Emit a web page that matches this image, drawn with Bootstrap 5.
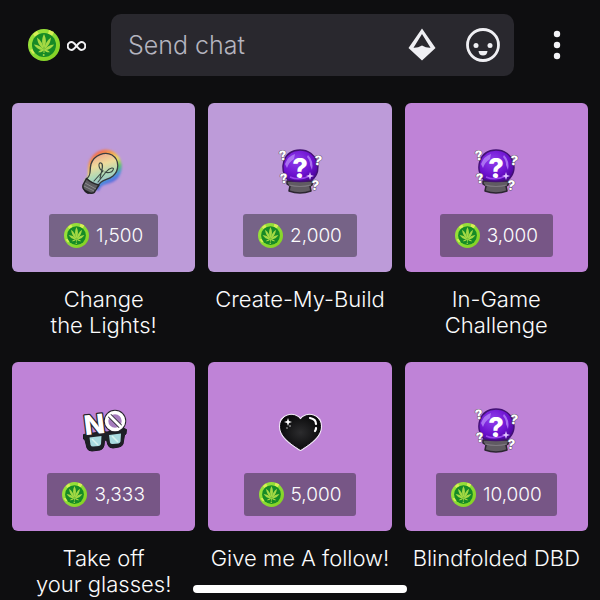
<!DOCTYPE html>
<html lang="en">
<head>
<meta charset="utf-8">
<meta name="viewport" content="width=device-width, initial-scale=1">
<title>Channel rewards</title>
<link href="https://cdn.jsdelivr.net/npm/bootstrap@5.3.0/dist/css/bootstrap.min.css" rel="stylesheet">
<style>
body { background: #0e0e10; color: #fbfbfc; font-family: Inter, "Liberation Sans", sans-serif; overflow-x: hidden; }
svg { display: block; flex: none; }
.plain-btn { background: none; border: 0; padding: 0; color: inherit; }
.chat-bar { padding: 14px 0 0 28px; }
.balance { gap: 7px; width: 83px; }
.chat-box { background: #29282e; border-radius: 10px; height: 62px; padding: 0 13px 0 17px; gap: 26px; min-width: 0; }
.chat-input, .chat-input:focus { background: transparent; border: 0; box-shadow: none; color: #efeff1; font-size: 25px; font-weight: 300; padding: 2px 0 0; min-width: 0; }
.chat-input::placeholder { color: #b4b4bf; opacity: 1; }
.more { width: 86px; }
.rewards { padding: 27px 12px 0; }
.reward-grid { display: grid; grid-template-columns: repeat(3, minmax(0, 1fr)); gap: 24px 13px; }
.reward-face { background: #bf83d7; border-radius: 6px; height: 169px; padding-bottom: 15px; gap: 14px; }
.reward-face.pale { background: #bd9bd9; }
.price { background: rgba(30, 30, 35, .45); border-radius: 3px; height: 43px; padding: 0 15px; gap: 7px; font-size: 19px; font-weight: 300; }
.amount { padding-top: 2px; }
.reward-name { margin-top: 14px; font-size: 22px; line-height: 26px; font-weight: 300; white-space: pre-line; }
.home-bar { left: 50%; bottom: 7px; width: 214px; height: 8px; margin-left: -107px; background: #fff; border-radius: 4px; }
.glyph { font-family: Inter, sans-serif; font-weight: 800; }
</style>
<script src="https://cdn.jsdelivr.net/npm/bootstrap@5.3.0/dist/js/bootstrap.bundle.min.js" defer></script>
</head>
<body>
<svg width="0" height="0" class="position-absolute" aria-hidden="true">
  <defs>
    <linearGradient id="rim" x1="0" y1="0" x2="1" y2="1"><stop offset="0" stop-color="#a2e23c"/><stop offset=".5" stop-color="#8bdc35"/><stop offset="1" stop-color="#83ce1e"/></linearGradient>
    <linearGradient id="rainbow" x1=".2" y1="0" x2=".7" y2="1"><stop offset="0" stop-color="#f0524f"/><stop offset=".25" stop-color="#f5a04e"/><stop offset=".45" stop-color="#e9dc62"/><stop offset=".62" stop-color="#5cc46c"/><stop offset=".78" stop-color="#4a8ee0"/><stop offset="1" stop-color="#7a37d8"/></linearGradient>
    <linearGradient id="glass" x1=".3" y1="0" x2=".6" y2="1"><stop offset="0" stop-color="#efa188"/><stop offset=".35" stop-color="#eedb9c"/><stop offset=".65" stop-color="#abd9b8"/><stop offset="1" stop-color="#8db3d8"/></linearGradient>
    <radialGradient id="orb" cx=".4" cy=".35" r=".7"><stop offset="0" stop-color="#9140ee"/><stop offset=".65" stop-color="#6c10ce"/><stop offset="1" stop-color="#4a0799"/></radialGradient>
    <radialGradient id="ink" cx=".5" cy=".5" r=".6"><stop offset="0" stop-color="#2c2c2e"/><stop offset="1" stop-color="#040405"/></radialGradient>
    <filter id="glow" x="-30%" y="-30%" width="160%" height="160%"><feGaussianBlur stdDeviation="1.3"/></filter>
    <symbol id="coin" viewBox="0 0 32 32">
      <circle cx="16" cy="16" r="16" fill="url(#rim)"/>
      <path d="M5 5l4-3 2 3-4 3zM21 1l5 2-2 4-4-2zM2 21l3-1 2 4-2 1z" fill="#d7ef55"/>
      <circle cx="16" cy="16" r="12" fill="#168a26"/>
      <g fill="#a4d944">
        <path d="M16 5c2.400 5 2.600 9 0 15c-2.600-6-2.400-10 0-15z"/>
        <path d="M9 8.500c4 3 6 6.500 7 12c-4.500-3.200-6.500-7-7-12zM23 8.500c-4 3-6 6.500-7 12c4.500-3.200 6.500-7 7-12z"/>
        <path d="M5.800 15.500c4.700.5 7.700 2 10.200 5.500c-4.600.4-7.700-1.600-10.200-5.500zM26.200 15.500c-4.700.5-7.700 2-10.200 5.500c4.600.4 7.700-1.600 10.200-5.500z"/>
        <path d="M10 23.200c2-2 4-2.500 6-2.300c-1.500 2-3.500 2.800-6 2.300zM22 23.200c-2-2-4-2.500-6-2.300c1.500 2 3.500 2.800 6 2.300z"/>
        <path d="M15.500 20h1v4h-1z"/><circle cx="15.700" cy="26" r="1"/>
      </g>
    </symbol>
    <symbol id="bulb" viewBox="0 0 56 56">
      <path d="M10 37C16 31 12 30 14 20C17 9 28 4 37 9C46 15 46 27 40 34C33 41 26 36 22 45z" fill="url(#rainbow)" stroke="url(#rainbow)" stroke-width="3" filter="url(#glow)"/>
      <path d="M10.500 35C16 30 13 28 15 20C18 11 29 7 36 11C44 16 43 27 37 32C31 37 26 34 21 43z" fill="url(#glass)" stroke="#3a3c40" stroke-width="1.300"/>
      <path d="M18 37L27 27C22 25 22 18 25 19C28 20 26 26 24 34M22 38L30 28C34 23 39 23 37 26C36 29 31 29 29 28" fill="none" stroke="#3a4641" stroke-width="1.100" stroke-linecap="round"/>
      <path d="M10.500 34.500Q15 39 23 41L19 47Q18 50 14 49L10 47Q6 45 7 41z" fill="#5d5d61" stroke="#28282b" stroke-width="1.500" stroke-linejoin="round"/>
      <path d="M9 39l11 6M8 42l10 5" stroke="#8b8b8e" stroke-width="1"/>
      <path d="M7 43q2 5 9 6l-4 1q-5-2-5-7z" fill="#202024"/>
    </symbol>
    <symbol id="crystal" viewBox="0 0 56 56">
      <path d="M15 37h26l-1 4-2 1 1 5q-11 4-22 0l1-5-3-2z" fill="#605b62" stroke="#2b2630" stroke-width="1.500" stroke-linejoin="round"/>
      <path d="M17 41q11 3 22 0" stroke="#807a83" stroke-width="1.200" fill="none"/>
      <path d="M16 36C6 26 11 6 28 6s24 20 12 30q-12 3-24 0z" fill="url(#orb)" stroke="#421074" stroke-width="1.400"/>
      <path d="M13 20q3-8 10-10l-1 5q-5 3-7 9zM36 11q6 6 4 15l-2-5q0-5-3-8z" fill="#b989fa" opacity=".75"/>
      <path d="M18 33q9 4 20-1" stroke="#9a45ec" stroke-width="1.500" fill="none"/>
      <g class="glyph" fill="#fff" text-anchor="middle">
        <text x="28" y="34" font-size="27">?</text>
        <g font-size="13" stroke="#62576d" stroke-width="1" paint-order="stroke">
          <text x="11" y="16" transform="rotate(-8 11 13)">?</text>
          <text x="46" y="21" transform="rotate(8 46 18)">?</text>
          <text x="12" y="39" transform="rotate(-8 12 36)">?</text>
          <text x="43" y="46" transform="rotate(6 43 43)">?</text>
        </g>
      </g>
      <path d="M38 28l1 3 3 1-3 1-1 3-1-3-3-1 3-1zM41 26v3" fill="#e1c5ff"/>
    </symbol>
    <symbol id="noglasses" viewBox="0 0 56 56">
      <path d="M7.500 31.500L27 28.500l4 .5 17-3.500 2.500 1-.5 4.500-1.500 1-1.500 9q-1 2.500-4 3l-6 1q-4 0-5-3l-1.500-5-2 .5-.5 5q-1 4-4 4.500l-8 1q-4 0-5-3l-2-8-1.500-1z" fill="#1e2026" stroke="#17181d" stroke-linejoin="round"/>
      <path d="M13.500 34.500l12-1.500-.5 8q-.5 1.500-2 2l-6 .5q-2 0-2.500-1.500zM33 32l12-1.500-.5 8q-.5 1.500-2 2l-6 .5q-2 0-2.500-1.500z" fill="#a9dbe0"/>
      <path d="M16 36l6 6M36 33l6 6" stroke="#d9f3ee" stroke-width="1.500"/>
      <text x="8" y="31" class="glyph" font-size="27" fill="#fff" stroke="#24222a" stroke-width="2.500" stroke-linejoin="round" paint-order="stroke" transform="rotate(-7 19 22)">N</text>
      <circle cx="39" cy="18" r="8.500" fill="none" stroke="#24222a" stroke-width="5.500"/>
      <circle cx="39" cy="18" r="8.500" fill="#a57cbd" stroke="#fff" stroke-width="3.600"/>
      <path d="M33.500 12.500l11 11" stroke="#24222a" stroke-width="4.500"/><path d="M33 12l12 12" stroke="#fff" stroke-width="2.800"/>
    </symbol>
    <symbol id="heart" viewBox="0 0 56 56">
      <path d="M28.500 46.500C20 41 8.500 34 8.500 23.500C8.500 11.500 23 9 28.500 17C34 9 48.500 11.500 48.500 23.500C48.500 34 37 41 28.500 46.500z" fill="url(#ink)" stroke="#efe6f5" stroke-width="3.200" stroke-linejoin="round"/>
      <path d="M28.500 46.500C20 41 8.500 34 8.500 23.500C8.500 11.500 23 9 28.500 17C34 9 48.500 11.500 48.500 23.500C48.500 34 37 41 28.500 46.500z" fill="url(#ink)" stroke="#08080a" stroke-width="1"/>
      <path d="M38 15q6 1 6 6M44 25q0 2-1 3" fill="none" stroke="#fff" stroke-width="2.200" stroke-linecap="round"/>
      <path d="M16 15l1 3 3 1-3 1-1 3-1-3-3-1 3-1z" fill="#fff"/><circle cx="15" cy="25" r=".7" fill="#ddd"/><circle cx="18" cy="23" r=".8" fill="#ddd"/>
    </symbol>
  </defs>
</svg>

<header>
  <form class="chat-bar d-flex align-items-center">
    <button type="button" class="plain-btn balance d-flex align-items-center flex-shrink-0" aria-label="Unlimited channel points">
      <svg width="32" height="32"><use href="#coin"/></svg>
      <svg width="19" height="13" viewBox="0 0 19 13"><path d="M9.500 7C7.500 4.500 6.500 3 4.700 3a3.500 3.500 0 0 0 0 8C6.500 11 7.500 9.500 9.500 7C11.500 4.500 12.500 3 14.300 3a3.500 3.500 0 0 1 0 8C12.500 11 11.500 9.500 9.500 7z" fill="none" stroke="#f2f2f5" stroke-width="2"/></svg>
    </button>
    <div class="chat-box d-flex align-items-center flex-grow-1">
      <input type="text" class="form-control chat-input flex-grow-1" placeholder="Send chat" aria-label="Send chat">
      <button type="button" class="plain-btn flex-shrink-0" aria-label="Cheer with bits">
        <svg width="34" height="34" viewBox="0 0 34 34"><path fill="#efeff3" fill-rule="evenodd" d="M17 0.500L30.500 20L17 32.500L3.500 20zM17 6L8.500 19.800Q13 20 17 17.500Q21 20 25.500 19.800z"/></svg>
      </button>
      <button type="button" class="plain-btn flex-shrink-0" aria-label="Emotes">
        <svg width="36" height="36" viewBox="0 0 36 36" fill="#efeff3"><circle cx="18" cy="18" r="15.500" fill="none" stroke="#efeff3" stroke-width="2.800"/><circle cx="11" cy="18.500" r="2.500"/><circle cx="25" cy="18.500" r="2.500"/><path d="M13.500 24h9q-.5 4.500-4.500 4.500t-4.500-4.500z"/></svg>
      </button>
    </div>
    <button type="button" class="plain-btn more d-flex justify-content-center flex-shrink-0" aria-label="More options">
      <svg width="8" height="30" viewBox="0 0 8 30" fill="#f3f3f6"><circle cx="4" cy="4" r="3.200"/><circle cx="4" cy="15" r="3.200"/><circle cx="4" cy="26" r="3.200"/></svg>
    </button>
  </form>
</header>

<main class="rewards">
  <div class="reward-grid">
    <button type="button" class="plain-btn d-flex flex-column align-items-stretch text-center">
      <span class="reward-face pale d-flex flex-column align-items-center justify-content-end">
        <svg width="56" height="56"><use href="#bulb"/></svg>
        <span class="price d-flex align-items-center"><svg width="25" height="25"><use href="#coin"/></svg><span class="amount">1,500</span></span>
      </span>
      <span class="reward-name">Change
the Lights!</span>
    </button>
    <button type="button" class="plain-btn d-flex flex-column align-items-stretch text-center">
      <span class="reward-face pale d-flex flex-column align-items-center justify-content-end">
        <svg width="56" height="56"><use href="#crystal"/></svg>
        <span class="price d-flex align-items-center"><svg width="25" height="25"><use href="#coin"/></svg><span class="amount">2,000</span></span>
      </span>
      <span class="reward-name">Create-My-Build</span>
    </button>
    <button type="button" class="plain-btn d-flex flex-column align-items-stretch text-center">
      <span class="reward-face d-flex flex-column align-items-center justify-content-end">
        <svg width="56" height="56"><use href="#crystal"/></svg>
        <span class="price d-flex align-items-center"><svg width="25" height="25"><use href="#coin"/></svg><span class="amount">3,000</span></span>
      </span>
      <span class="reward-name">In-Game
Challenge</span>
    </button>
    <button type="button" class="plain-btn d-flex flex-column align-items-stretch text-center">
      <span class="reward-face d-flex flex-column align-items-center justify-content-end">
        <svg width="56" height="56"><use href="#noglasses"/></svg>
        <span class="price d-flex align-items-center"><svg width="25" height="25"><use href="#coin"/></svg><span class="amount">3,333</span></span>
      </span>
      <span class="reward-name">Take off
your glasses!</span>
    </button>
    <button type="button" class="plain-btn d-flex flex-column align-items-stretch text-center">
      <span class="reward-face d-flex flex-column align-items-center justify-content-end">
        <svg width="56" height="56"><use href="#heart"/></svg>
        <span class="price d-flex align-items-center"><svg width="25" height="25"><use href="#coin"/></svg><span class="amount">5,000</span></span>
      </span>
      <span class="reward-name">Give me A follow!</span>
    </button>
    <button type="button" class="plain-btn d-flex flex-column align-items-stretch text-center">
      <span class="reward-face d-flex flex-column align-items-center justify-content-end">
        <svg width="56" height="56"><use href="#crystal"/></svg>
        <span class="price d-flex align-items-center"><svg width="25" height="25"><use href="#coin"/></svg><span class="amount">10,000</span></span>
      </span>
      <span class="reward-name">Blindfolded DBD</span>
    </button>
  </div>
</main>
<div class="home-bar position-fixed" aria-hidden="true"></div>
</body>
</html>
